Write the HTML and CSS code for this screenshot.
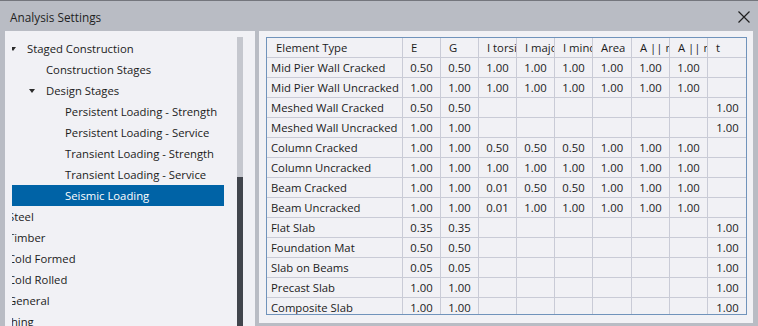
FILE: index.html
```html
<!DOCTYPE html>
<html lang="en">
<head>
    <meta charset="UTF-8">
    <title>Analysis Settings</title>
    <link rel="stylesheet" href="styles.css">
</head>
<body>
    <div class="window">
        <div class="titlebar">
            <span class="title">Analysis Settings</span>
            <button class="close-button" title="Close">
                <svg width="12" height="12" viewBox="0 0 12 12">
                    <path d="M0.5 0.5 L11.5 11.5 M11.5 0.5 L0.5 11.5" stroke="#1f1f1f" stroke-width="1.2" fill="none"/>
                </svg>
            </button>
        </div>
        <div class="content">
            <div class="nav-panel">
                <div class="tree-view">
                    <div class="tree-list">
                        <div class="tree-item level-2"><span class="expander open"></span>Staged Construction</div>
                        <div class="tree-item level-3"><span class="expander"></span>Construction Stages</div>
                        <div class="tree-item level-3"><span class="expander open"></span>Design Stages</div>
                        <div class="tree-item level-4"><span class="expander"></span>Persistent Loading - Strength</div>
                        <div class="tree-item level-4"><span class="expander"></span>Persistent Loading - Service</div>
                        <div class="tree-item level-4"><span class="expander"></span>Transient Loading - Strength</div>
                        <div class="tree-item level-4"><span class="expander"></span>Transient Loading - Service</div>
                        <div class="tree-item level-4 selected"><span class="expander"></span>Seismic Loading</div>
                        <div class="tree-item level-1"><span class="expander"></span>Steel</div>
                        <div class="tree-item level-1"><span class="expander"></span>Timber</div>
                        <div class="tree-item level-1"><span class="expander"></span>Cold Formed</div>
                        <div class="tree-item level-1"><span class="expander"></span>Cold Rolled</div>
                        <div class="tree-item level-1"><span class="expander"></span>General</div>
                        <div class="tree-item level-0"><span class="expander"></span>Meshing</div>
                    </div>
                </div>
                <div class="scrollbar"><div class="scroll-thumb"></div></div>
            </div>
            <div class="grid-panel">
                <div class="grid-wrap">
                    <table class="grid">
                        <thead>
                            <tr>
                                <th class="col-type">Element Type</th>
                                <th>E</th>
                                <th>G</th>
                                <th>I torsion</th>
                                <th>I major</th>
                                <th>I minor</th>
                                <th class="col-wide">Area</th>
                                <th>A || minor</th>
                                <th>A || major</th>
                                <th class="col-wide">t</th>
                            </tr>
                        </thead>
                        <tbody id="gridBody"></tbody>
                    </table>
                </div>
            </div>
        </div>
    </div>
    <script>
        const rows = [
            ['Mid Pier Wall Cracked', '0.50', '0.50', '1.00', '1.00', '1.00', '1.00', '1.00', '1.00', ''],
            ['Mid Pier Wall Uncracked', '1.00', '1.00', '1.00', '1.00', '1.00', '1.00', '1.00', '1.00', ''],
            ['Meshed Wall Cracked', '0.50', '0.50', '', '', '', '', '', '', '1.00'],
            ['Meshed Wall Uncracked', '1.00', '1.00', '', '', '', '', '', '', '1.00'],
            ['Column Cracked', '1.00', '1.00', '0.50', '0.50', '0.50', '1.00', '1.00', '1.00', ''],
            ['Column Uncracked', '1.00', '1.00', '1.00', '1.00', '1.00', '1.00', '1.00', '1.00', ''],
            ['Beam Cracked', '1.00', '1.00', '0.01', '0.50', '0.50', '1.00', '1.00', '1.00', ''],
            ['Beam Uncracked', '1.00', '1.00', '0.01', '1.00', '1.00', '1.00', '1.00', '1.00', ''],
            ['Flat Slab', '0.35', '0.35', '', '', '', '', '', '', '1.00'],
            ['Foundation Mat', '0.50', '0.50', '', '', '', '', '', '', '1.00'],
            ['Slab on Beams', '0.05', '0.05', '', '', '', '', '', '', '1.00'],
            ['Precast Slab', '1.00', '1.00', '', '', '', '', '', '', '1.00'],
            ['Composite Slab', '1.00', '1.00', '', '', '', '', '', '', '1.00']
        ];

        const gridBody = document.getElementById('gridBody');

        rows.forEach(row => {
            const tr = document.createElement('tr');
            row.forEach((value, index) => {
                const td = document.createElement('td');
                td.textContent = value;
                if (index === 0) td.classList.add('name-cell');
                tr.appendChild(td);
            });
            gridBody.appendChild(tr);
        });
    </script>
</body>
</html>
```

FILE: styles.css
```css
html, body {
    margin: 0;
    padding: 0;
    overflow: hidden;
}

body {
    font-family: 'Open Sans', 'Liberation Sans', sans-serif;
    font-size: 11.3px;
    color: #1b1b1b;
    background-color: #b9bcc4;
}

.window {
    width: 758px;
    height: 326px;
    box-sizing: border-box;
    border-top: 1px solid #74767d;
    background-color: #b9bcc4;
    overflow: hidden;
}

.titlebar {
    display: flex;
    align-items: center;
    justify-content: space-between;
    height: 30px;
    padding: 0 8px 0 10px;
}

.title {
    font-size: 11.8px;
    color: #1f1f1f;
    margin-top: 1px;
}

.close-button {
    border: none;
    background: none;
    padding: 0;
    width: 12px;
    height: 12px;
    margin-top: 2px;
    display: flex;
    cursor: pointer;
}

.content {
    display: flex;
    align-items: flex-start;
    gap: 4px;
    padding: 0 5px;
}

/* left tree */
.nav-panel {
    display: flex;
    align-items: flex-start;
    width: 250px;
    height: 300px;
    box-sizing: border-box;
    padding: 6px 12px 0 7px;
    background-color: #f1f1f5;
}

.tree-view {
    width: 225px;
    height: 294px;
    padding-top: 1px;
    box-sizing: border-box;
    overflow: hidden;
}

.tree-list {
    width: 254px;
    margin-left: -42px;
}

.tree-item {
    display: flex;
    align-items: center;
    height: 21px;
    line-height: 21px;
    white-space: nowrap;
}

.tree-item.selected {
    background-color: #0063a6;
    color: #fff;
}

.level-1 { padding-left: 19px; }
.level-2 { padding-left: 38px; }
.level-3 { padding-left: 57px; }
.level-4 { padding-left: 76px; }

.expander {
    flex: none;
    width: 19px;
    height: 21px;
    display: flex;
    align-items: center;
}

.expander.open::before {
    content: '';
    margin-left: 2px;
    border-left: 3px solid transparent;
    border-right: 3px solid transparent;
    border-top: 4px solid #2b2b2b;
}

.scrollbar {
    flex: none;
    width: 6px;
    height: 294px;
    display: flex;
    flex-direction: column;
    background-color: #c5c7ce;
}

.scroll-thumb {
    margin-top: 140px;
    flex: 1;
    background-color: #41454c;
}

/* right grid */
.grid-panel {
    width: 494px;
    height: 292px;
    box-sizing: border-box;
    padding: 6px 6px 0 7px;
    background-color: #f1f1f5;
}

.grid-wrap {
    height: 278px;
    box-sizing: border-box;
    border: 1px solid #7093bb;
    overflow: hidden;
}

.grid {
    width: 479px;
    table-layout: fixed;
    border-collapse: separate;
    border-spacing: 0;
}

.grid th,
.grid td {
    box-sizing: border-box;
    width: 38px;
    height: 20px;
    padding: 0;
    line-height: 19px;
    border-right: 1px solid #c9cbd6;
    border-bottom: 1px solid #c9cbd6;
    white-space: nowrap;
    overflow: hidden;
    font-weight: normal;
}

.grid th {
    text-align: left;
    text-overflow: clip;
    padding-left: 8px;
}

.grid th.col-type {
    width: 136px;
    padding-left: 9px;
}

.grid th.col-wide {
    width: 39px;
}

.grid th:last-child,
.grid td:last-child {
    border-right: none;
}

.grid td {
    text-align: center;
}

.grid td.name-cell {
    text-align: left;
    padding-left: 4px;
}
```
